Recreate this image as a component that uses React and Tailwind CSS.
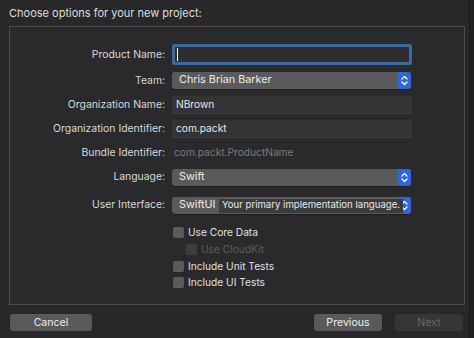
import React from 'react';

const font = { fontFamily: '"Inter", "Liberation Sans", sans-serif' };

const Label = ({ children }) => (
  <div className="w-[162px] pr-[7px] text-right text-[10.4px] text-[#d8d8d8] shrink-0">{children}</div>
);

const Stepper = () => (
  <div className="w-[13px] h-full bg-[#2f66d8] rounded-r-[3px] flex items-center justify-center">
    <svg width="7" height="11" viewBox="0 0 7 11" fill="none" stroke="white" strokeWidth="1.3" strokeLinecap="round" strokeLinejoin="round">
      <path d="M1 4 L3.5 1.5 L6 4" />
      <path d="M1 7 L3.5 9.5 L6 7" />
    </svg>
  </div>
);

const Popup = ({ value, children }) => (
  <div className="relative w-[239px] h-[17px] bg-[#5a5a5c] rounded-[3px] flex items-center shadow-[0_1px_0_rgba(0,0,0,0.3)]">
    <span className="flex-1 pl-[7px] text-[10.8px] text-[#ececec]">{value}</span>
    <Stepper />
    {children}
  </div>
);

const Field = ({ value }) => (
  <div className="w-[240px] h-[18px] bg-[#333335] border-b border-[#3e3e40] flex items-center pl-[4px] text-[10.2px] text-[#e6e6e6]">
    {value}
  </div>
);

const Check = ({ label, disabled, indent }) => (
  <div className={`flex items-center gap-[4px] ${indent ? 'pl-[13px]' : ''}`}>
    <div className={`w-[11px] h-[11px] rounded-[2px] ${disabled ? 'bg-[#3e3e40]' : 'bg-[#5c5c5e]'}`} />
    <span className={`text-[10.2px] ${disabled ? 'text-[#5e5e60]' : 'text-[#e0e0e0]'}`}>{label}</span>
  </div>
);

const Row = ({ h, label, children }) => (
  <div className="flex items-center" style={{ height: h }}>
    <Label>{label}</Label>
    {children}
  </div>
);

export default function App() {
  return (
    <div className="w-[474px] h-[338px] bg-[#28282a] overflow-hidden relative" style={font}>
      <div className="pl-[9px] pt-[5px] h-[26px] text-[11px] text-[#dedede]">Choose options for your new project:</div>
      <div className="ml-[9px] w-[456px] h-[279px] border border-[#4c4c4e] bg-[#2a2a2c] pt-[15px]">
        <Row h={25} label="Product Name:">
          <div className="w-[240px] h-[21px] border-[3px] border-[#3d6b99] rounded-[2px] bg-[#2e2e30] flex items-center pl-[2px]">
            <div className="w-px h-[13px] bg-white" />
          </div>
        </Row>
        <Row h={27} label="Team:">
          <Popup value="Chris Brian Barker" />
        </Row>
        <Row h={22} label="Organization Name:">
          <Field value="NBrown" />
        </Row>
        <Row h={26} label="Organization Identifier:">
          <Field value="com.packt" />
        </Row>
        <Row h={22} label="Bundle Identifier:">
          <span className="pl-[2px] text-[10.2px] text-[#7a7a7c]">com.packt.ProductName</span>
        </Row>
        <Row h={26} label="Language:">
          <Popup value="Swift" />
        </Row>
        <Row h={30} label="User Interface:">
          <Popup value="SwiftUI">
            <div className="absolute left-[47px] top-[2px] w-[184px] h-[14px] bg-[#3c3c3e] flex items-center pl-[3px] text-[9.6px] text-[#e8e8e8] whitespace-nowrap">
              Your primary implementation language.
            </div>
          </Popup>
        </Row>
        <div className="pl-[163px] pt-[4px] flex flex-col">
          <div className="h-[17px] flex items-center"><Check label="Use Core Data" /></div>
          <div className="h-[17px] flex items-center"><Check label="Use CloudKit" disabled indent /></div>
          <div className="h-[17px] flex items-center"><Check label="Include Unit Tests" /></div>
          <div className="h-[16px] flex items-center"><Check label="Include UI Tests" /></div>
        </div>
      </div>
      <div className="flex items-center pl-[10px] pt-[9px]">
        <button className="w-[82px] h-[17px] bg-[#5a5a5c] rounded-[3px] text-[10.6px] text-[#ececec]">Cancel</button>
        <div className="flex-1" />
        <button className="w-[68px] h-[17px] bg-[#5a5a5c] rounded-[3px] text-[10.6px] text-[#ececec]">Previous</button>
        <button className="ml-[13px] mr-[11px] w-[68px] h-[17px] bg-[#363638] rounded-[3px] text-[10.6px] text-[#69696b]">Next</button>
      </div>
      <div className="absolute right-0 top-0 w-[5px] h-full bg-[#202022] border-l border-[#1a1a1c]" />
    </div>
  );
}
